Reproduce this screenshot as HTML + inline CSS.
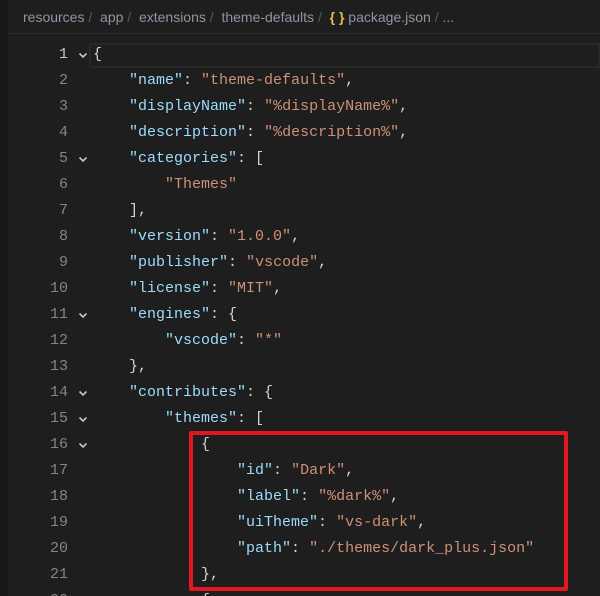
<!DOCTYPE html>
<html><head><meta charset="utf-8"><style>
*{margin:0;padding:0;box-sizing:border-box}
html,body{width:600px;height:596px;overflow:hidden}
body{background:#1e1e1e;position:relative;font-family:"Liberation Mono",monospace}
.strip{position:absolute;left:0;top:0;width:8px;height:596px;background:#181818}
.bc{position:absolute;left:8px;top:0;right:0;height:34px;border-bottom:1px solid #2b2b2b;font-family:"Liberation Sans",sans-serif;font-size:14px;color:#8e96a3;line-height:34px;padding-left:15px;white-space:pre}
.bc .s{color:#555b63}
.bc .br{color:#e2c048;font-weight:bold}
.cur{position:absolute;left:89px;right:0;top:43px;height:25px;border:2px solid #282828}
.ln{position:absolute;left:0;width:68px;text-align:right;color:#858585;font-size:15px;line-height:26px;height:26px}
.code{position:absolute;left:93px;font-size:15px;line-height:26px;height:26px;white-space:pre;color:#d4d4d4}
.k{color:#9cdcfe}.v{color:#ce9178}
.chev{position:absolute;left:78px;width:10px;height:10px}
.box{position:absolute;left:189px;top:431px;width:379px;height:160px;border:4px solid #e2171f;border-radius:2px}
</style></head><body>
<div class="strip"></div>
<div class="bc">resources <span class="s">/</span>  app <span class="s">/</span>  extensions <span class="s">/</span>  theme-defaults <span class="s">/</span>  <span class="br">{ }</span> package.json <span class="s">/</span> ...</div>
<div class="cur"></div>

<div class="ln" style="top:42px;color:#c6c6c6">1</div><div class="code" style="top:42px">{</div>
<div class="ln" style="top:68px">2</div><div class="code" style="top:68px">    <span class="k">"name"</span>: <span class="v">"theme-defaults"</span>,</div>
<div class="ln" style="top:94px">3</div><div class="code" style="top:94px">    <span class="k">"displayName"</span>: <span class="v">"%displayName%"</span>,</div>
<div class="ln" style="top:120px">4</div><div class="code" style="top:120px">    <span class="k">"description"</span>: <span class="v">"%description%"</span>,</div>
<div class="ln" style="top:146px">5</div><div class="code" style="top:146px">    <span class="k">"categories"</span>: [</div>
<div class="ln" style="top:172px">6</div><div class="code" style="top:172px">        <span class="v">"Themes"</span></div>
<div class="ln" style="top:198px">7</div><div class="code" style="top:198px">    ],</div>
<div class="ln" style="top:224px">8</div><div class="code" style="top:224px">    <span class="k">"version"</span>: <span class="v">"1.0.0"</span>,</div>
<div class="ln" style="top:250px">9</div><div class="code" style="top:250px">    <span class="k">"publisher"</span>: <span class="v">"vscode"</span>,</div>
<div class="ln" style="top:276px">10</div><div class="code" style="top:276px">    <span class="k">"license"</span>: <span class="v">"MIT"</span>,</div>
<div class="ln" style="top:302px">11</div><div class="code" style="top:302px">    <span class="k">"engines"</span>: {</div>
<div class="ln" style="top:328px">12</div><div class="code" style="top:328px">        <span class="k">"vscode"</span>: <span class="v">"*"</span></div>
<div class="ln" style="top:354px">13</div><div class="code" style="top:354px">    },</div>
<div class="ln" style="top:380px">14</div><div class="code" style="top:380px">    <span class="k">"contributes"</span>: {</div>
<div class="ln" style="top:406px">15</div><div class="code" style="top:406px">        <span class="k">"themes"</span>: [</div>
<div class="ln" style="top:432px">16</div><div class="code" style="top:432px">            {</div>
<div class="ln" style="top:458px">17</div><div class="code" style="top:458px">                <span class="k">"id"</span>: <span class="v">"Dark"</span>,</div>
<div class="ln" style="top:484px">18</div><div class="code" style="top:484px">                <span class="k">"label"</span>: <span class="v">"%dark%"</span>,</div>
<div class="ln" style="top:510px">19</div><div class="code" style="top:510px">                <span class="k">"uiTheme"</span>: <span class="v">"vs-dark"</span>,</div>
<div class="ln" style="top:536px">20</div><div class="code" style="top:536px">                <span class="k">"path"</span>: <span class="v">"./themes/dark_plus.json"</span></div>
<div class="ln" style="top:562px">21</div><div class="code" style="top:562px">            },</div>
<div class="ln" style="top:588px">22</div><div class="code" style="top:588px">            {</div>

<svg class="chev" style="top:50px" viewBox="0 0 10 10"><path d="M1.5 3.5L5 7 8.5 3.5" fill="none" stroke="#c5c5c5" stroke-width="1.6"/></svg>
<svg class="chev" style="top:154px" viewBox="0 0 10 10"><path d="M1.5 3.5L5 7 8.5 3.5" fill="none" stroke="#c5c5c5" stroke-width="1.6"/></svg>
<svg class="chev" style="top:310px" viewBox="0 0 10 10"><path d="M1.5 3.5L5 7 8.5 3.5" fill="none" stroke="#c5c5c5" stroke-width="1.6"/></svg>
<svg class="chev" style="top:388px" viewBox="0 0 10 10"><path d="M1.5 3.5L5 7 8.5 3.5" fill="none" stroke="#c5c5c5" stroke-width="1.6"/></svg>
<svg class="chev" style="top:414px" viewBox="0 0 10 10"><path d="M1.5 3.5L5 7 8.5 3.5" fill="none" stroke="#c5c5c5" stroke-width="1.6"/></svg>
<svg class="chev" style="top:440px" viewBox="0 0 10 10"><path d="M1.5 3.5L5 7 8.5 3.5" fill="none" stroke="#c5c5c5" stroke-width="1.6"/></svg>

<div class="box"></div>
</body></html>
